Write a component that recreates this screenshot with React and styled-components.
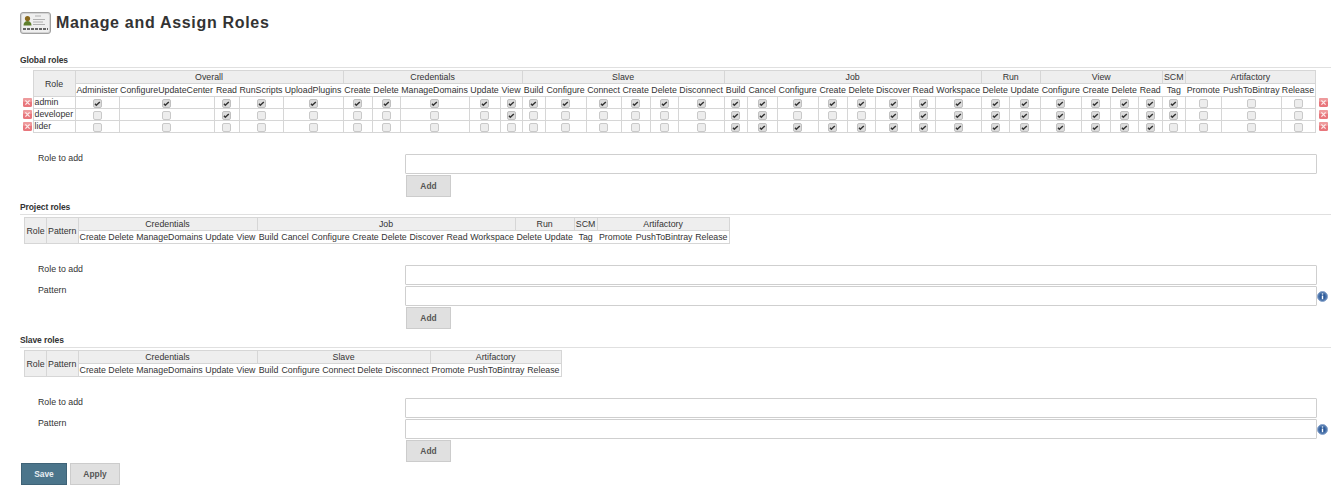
import React from "react"
import styled, { createGlobalStyle } from "styled-components"

const GlobalStyle = createGlobalStyle`
  html, body {
    margin: 0;
    background: #fff;
  }
  body {
    font-family: "Liberation Sans", Arial, sans-serif;
    font-size: 8.8px;
    color: #333;
  }
`

const Page = styled.div`
  width: 1331px;
  height: 488px;
  overflow: hidden;
  padding-left: 20px;
  box-sizing: border-box;
`

const TitleRow = styled.div`
  display: flex;
  align-items: center;
  gap: 5px;
  height: 44px;
  box-sizing: border-box;
  padding-top: 2px;
`

const Title = styled.h1`
  margin: 0;
  font-size: 16px;
  font-weight: 700;
  letter-spacing: 0.69px;
  color: #333;
`

const Section = styled.section`
  height: ${p => p.$height}px;
`

const SectionTitle = styled.h2`
  margin: 0;
  height: 24px;
  box-sizing: border-box;
  padding-top: 11px;
  border-bottom: 1px solid #e0e0e0;
  line-height: 11px;
  font-size: 8.5px;
  font-weight: 700;
  color: #333;
  letter-spacing: -0.1px;
`

const Table = styled.table`
  border-collapse: collapse;
  table-layout: fixed;
  width: ${p => p.$width}px;
  margin: 2px 0 0 ${p => p.$left}px;
  font-size: 8.8px;
  color: #333;
`

const Head = styled.th`
  height: 12px;
  padding: 0;
  font-weight: 400;
  text-align: center;
  white-space: nowrap;
  line-height: 12px;
  background: #eeeeee;
  border: 1px solid #d6d6d6;
`

const SubHead = styled(Head)`
  background: #fff;
  border-left: 0;
  border-right: ${p => (p.$last ? "1px solid #d6d6d6" : "0")};
`

const IconCell = styled.td`
  padding: 0;
  border: 0;
  vertical-align: middle;
  line-height: 0;
  text-align: ${p => (p.$right ? "left" : "right")};
  padding-left: ${p => (p.$right ? "3px" : "0")};
  padding-right: ${p => (p.$right ? "0" : "1px")};
`

const Cell = styled.td`
  height: 11px;
  padding: 0;
  line-height: 11px;
  text-align: center;
  white-space: nowrap;
  border: 1px solid #d6d6d6;
`

const NameCell = styled(Cell)`
  text-align: left;
  padding-left: 1px;
`

const Check = styled.input.attrs({ type: "checkbox" })`
  appearance: none;
  display: block;
  width: 9px;
  height: 9px;
  margin: 1px auto 0;
  box-sizing: border-box;
  border: 1px solid #c9c9c9;
  border-radius: 2px;
  background: #ededed;

  &:checked {
    border-color: #c0c0c0;
    background: #dcdcdc url("data:image/svg+xml,%3Csvg xmlns='http://www.w3.org/2000/svg' viewBox='0 0 9 9'%3E%3Cpath d='M2 4.8l1.3 1.4L6.8 3' fill='none' stroke='%23333' stroke-width='1.5'/%3E%3C/svg%3E") center / 9px 9px no-repeat;
  }
`

const FormGrid = styled.div`
  display: grid;
  grid-template-columns: 385px 912px 1fr;
  grid-auto-rows: 21px;
  align-items: start;
  margin-top: ${p => p.$top}px;
`

const Label = styled.div`
  padding: 0 0 0 18px;
  line-height: 11px;
  color: #333;
  margin-top: -1px;
`

const TextField = styled.input`
  width: 100%;
  height: 20px;
  box-sizing: border-box;
  border: 1px solid #cfcfcf;
  border-radius: 1px;
  background: #fff;
  padding: 0 3px;
  outline: none;
`

const Help = styled.span`
  display: flex;
  padding: 5px 0 0 0;
`

const Spacer = styled.div``

const Button = styled.button`
  display: block;
  box-sizing: border-box;
  width: ${p => p.$width}px;
  height: 22px;
  margin: 0;
  padding: 0;
  font-family: inherit;
  font-size: 8.4px;
  font-weight: 700;
  color: ${p => (p.$primary ? "#e8eef2" : "#555")};
  background: ${p => (p.$primary ? "#4b758b" : "#e0e0e0")};
  border: 1px solid ${p => (p.$primary ? "#3f6377" : "#cccccc")};
`

const AddButton = styled(Button)`
  margin-left: 1px;
`

const Footer = styled.div`
  display: flex;
  gap: 3px;
  margin-left: 1px;
`

const Logo = () => (
  <svg width="31" height="22" viewBox="0 0 31 22">
    <rect x="0.5" y="0.5" width="30" height="21" rx="2.5" fill="#d4d4d4" stroke="#a0a0a0" />
    <rect x="2" y="2" width="27" height="18" rx="1.5" fill="#efefef" />
    <circle cx="7.5" cy="6.5" r="2.6" fill="#8a6a1e" />
    <path d="M3.5 13.5c0-3 1.6-4.6 4-4.6s4 1.6 4 4.6z" fill="#5f7f2c" />
    <path d="M15 4h6M13 7.5h12M13 10h10M13 12.5h12" stroke="#b0b0b0" strokeWidth="1" />
    <path d="M3 17h25" stroke="#666" strokeWidth="2" strokeDasharray="3 1" />
  </svg>
)

const DeleteIcon = () => (
  <svg width="9" height="9" viewBox="0 0 9 9">
    <rect width="9" height="9" rx="1.5" fill="#e8767c" />
    <rect width="9" height="4" rx="1.5" fill="#ee9a9c" />
    <path d="M2.4 2.4l4.2 4.2M6.6 2.4L2.4 6.6" stroke="#fbeaea" strokeWidth="1.3" />
  </svg>
)

const HelpIcon = () => (
  <svg width="11" height="11" viewBox="0 0 11 11">
    <circle cx="5.5" cy="5.5" r="5" fill="#4f77ad" stroke="#8aa5cc" />
    <circle cx="5.5" cy="5.5" r="3" fill="#2f5c9b" />
    <path d="M5.5 4.6v3.6" stroke="#fff" strokeWidth="1.4" />
    <path d="M5.5 2.4v1.2" stroke="#fff" strokeWidth="1.4" />
  </svg>
)

const credentials = {
  name: "Credentials",
  items: [["Create", 29], ["Delete", 28], ["ManageDomains", 69], ["Update", 31], ["View", 22]],
}
const overall = {
  name: "Overall",
  items: [["Administer", 44], ["ConfigureUpdateCenter", 95], ["Read", 25], ["RunScripts", 44], ["UploadPlugins", 60]],
}
const slave = {
  name: "Slave",
  items: [["Build", 23], ["Configure", 41], ["Connect", 35], ["Create", 29], ["Delete", 28], ["Disconnect", 46]],
}
const job = {
  name: "Job",
  items: [["Build", 23], ["Cancel", 30], ["Configure", 41], ["Create", 29], ["Delete", 28], ["Discover", 36], ["Read", 24], ["Workspace", 46]],
}
const run = { name: "Run", items: [["Delete", 28], ["Update", 31]] }
const view = { name: "View", items: [["Configure", 41], ["Create", 29], ["Delete", 28], ["Read", 24]] }
const scm = { name: "SCM", items: [["Tag", 23]] }
const artifactory = { name: "Artifactory", items: [["Promote", 36], ["PushToBintray", 60], ["Release", 34]] }

const globalGroups = [overall, credentials, slave, job, run, view, scm, artifactory]

const projectGroups = [
  credentials,
  { name: "Job", items: [["Build", 23], ["Cancel", 30], ["Configure", 41], ["Create", 29], ["Delete", 28], ["Discover", 37], ["Read", 24], ["Workspace", 46]] },
  run,
  scm,
  { name: "Artifactory", items: [["Promote", 37], ["PushToBintray", 60], ["Release", 35]] },
]

const slaveGroups = [
  credentials,
  { name: "Slave", items: [["Build", 23], ["Configure", 41], ["Connect", 35], ["Delete", 28], ["Disconnect", 46]] },
  { name: "Artifactory", items: [["Promote", 36], ["PushToBintray", 60], ["Release", 35]] },
]

// 1 = ticked, in column order of globalGroups
const roles = [
  { name: "admin", ticks: "11111" + "11111" + "111111" + "11111111" + "11" + "1111" + "1" + "000" },
  { name: "developer", ticks: "00100" + "00001" + "000000" + "11000111" + "11" + "1111" + "1" + "000" },
  { name: "lider", ticks: "00000" + "00000" + "000000" + "11111111" + "11" + "1111" + "0" + "000" },
]

const sumWidths = columns => columns.reduce((total, c) => total + c[1], 0)

const GlobalTable = () => {
  const columns = globalGroups.flatMap(g => g.items)
  return (
    <Table $left={0} $width={13 + 42 + sumWidths(columns) + 13}>
      <colgroup>
        <col width="13" />
        <col width="42" />
        {columns.map(([label, w], i) => (
          <col key={i} width={w} />
        ))}
        <col width="13" />
      </colgroup>
      <thead>
        <tr>
          <IconCell rowSpan={2} />
          <Head rowSpan={2}>Role</Head>
          {globalGroups.map(g => (
            <Head key={g.name} colSpan={g.items.length}>{g.name}</Head>
          ))}
          <IconCell rowSpan={2} />
        </tr>
        <tr>
          {columns.map(([label], i) => (
            <SubHead key={i} $last={i === columns.length - 1}>{label}</SubHead>
          ))}
        </tr>
      </thead>
      <tbody>
        {roles.map(role => (
          <tr key={role.name}>
            <IconCell><DeleteIcon /></IconCell>
            <NameCell>{role.name}</NameCell>
            {columns.map((c, i) => (
              <Cell key={i}>
                <Check defaultChecked={role.ticks[i] === "1"} />
              </Cell>
            ))}
            <IconCell $right><DeleteIcon /></IconCell>
          </tr>
        ))}
      </tbody>
    </Table>
  )
}

const PatternTable = ({ groups }) => {
  const columns = groups.flatMap(g => g.items)
  return (
    <Table $left={4} $width={22 + 31.5 + sumWidths(columns)}>
      <colgroup>
        <col width="22" />
        <col width="31.5" />
        {columns.map(([label, w], i) => (
          <col key={i} width={w} />
        ))}
      </colgroup>
      <thead>
        <tr>
          <Head rowSpan={2}>Role</Head>
          <Head rowSpan={2}>Pattern</Head>
          {groups.map(g => (
            <Head key={g.name} colSpan={g.items.length}>{g.name}</Head>
          ))}
        </tr>
        <tr>
          {columns.map(([label], i) => (
            <SubHead key={i} $last={i === columns.length - 1}>{label}</SubHead>
          ))}
        </tr>
      </thead>
    </Table>
  )
}

const App = () => (
  <Page>
    <GlobalStyle />
    <TitleRow>
      <Logo />
      <Title>Manage and Assign Roles</Title>
    </TitleRow>

    <Section $height={147}>
      <SectionTitle>Global roles</SectionTitle>
      <GlobalTable />
      <FormGrid $top={21}>
        <Label>Role to add</Label>
        <TextField />
        <Spacer />
        <Spacer />
        <AddButton $width={45}>Add</AddButton>
      </FormGrid>
    </Section>

    <Section $height={133}>
      <SectionTitle>Project roles</SectionTitle>
      <PatternTable groups={projectGroups} />
      <FormGrid $top={21}>
        <Label>Role to add</Label>
        <TextField />
        <Spacer />
        <Label>Pattern</Label>
        <TextField />
        <Help><HelpIcon /></Help>
        <Spacer />
        <AddButton $width={45}>Add</AddButton>
      </FormGrid>
    </Section>

    <Section $height={139}>
      <SectionTitle>Slave roles</SectionTitle>
      <PatternTable groups={slaveGroups} />
      <FormGrid $top={21}>
        <Label>Role to add</Label>
        <TextField />
        <Spacer />
        <Label>Pattern</Label>
        <TextField />
        <Help><HelpIcon /></Help>
        <Spacer />
        <AddButton $width={45}>Add</AddButton>
      </FormGrid>
    </Section>

    <Footer>
      <Button $primary $width={46}>Save</Button>
      <Button $width={50}>Apply</Button>
    </Footer>
  </Page>
)

export default App
